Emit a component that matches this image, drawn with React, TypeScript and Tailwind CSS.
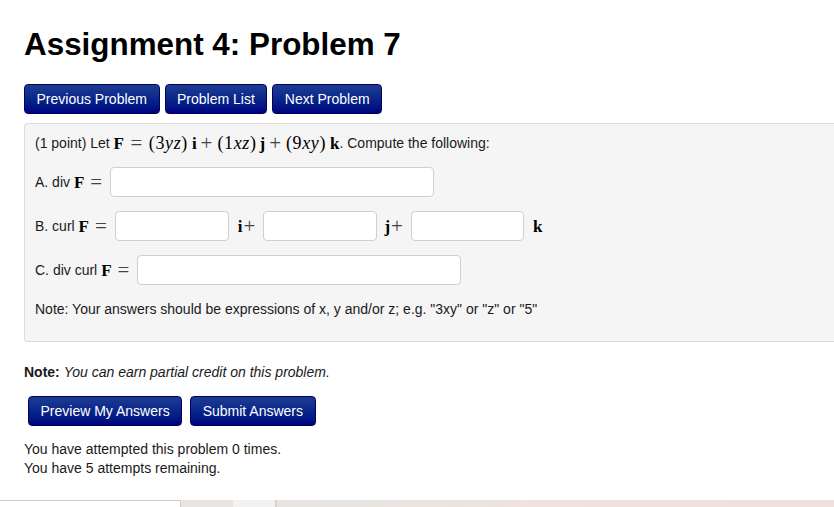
import type { ReactNode } from 'react';

const serif = "font-['Liberation_Serif','Times_New_Roman',serif]";

function Btn({ children }: { children: ReactNode }) {
    return (
        <button
            type="button"
            className="h-[30px] rounded-[4px] border border-[#00005e] bg-linear-to-b from-[#1f3c92] to-[#000080] px-[11.5px] text-[14px] leading-none text-white"
        >
            {children}
        </button>
    );
}

function Bold({ children }: { children: ReactNode }) {
    return <span className={`${serif} text-[17px] font-bold text-black`}>{children}</span>;
}

// = and + drawn larger and lighter, like the MathJax operators
function Op({ children, className = 'mx-[6.5px]' }: { children: ReactNode; className?: string }) {
    return <span className={`${serif} ${className} text-[21px] leading-none text-[#444]`}>{children}</span>;
}

function Paren({ n, v }: { n: string; v: string }) {
    return (
        <span className={`${serif} text-[18px] tracking-[0.6px] text-black`}>
            ({n}
            <i>{v}</i>)
        </span>
    );
}

function Field({ w }: { w: string }) {
    return <input type="text" className={`${w} h-[30px] rounded-[4px] border border-[#cfcfcf] bg-white`} />;
}

export default function App() {
    return (
        <div className="min-h-[507px] overflow-hidden bg-white font-['Liberation_Sans',Arial,sans-serif] text-[14px] text-[#1a1a1a]">
            <div className="pl-6 pt-[29px]">
                <h1 className="text-[31.4px] font-bold leading-none text-black">Assignment 4: Problem 7</h1>

                <div className="mt-[24px] flex gap-[5px]">
                    <Btn>Previous Problem</Btn>
                    <Btn>Problem List</Btn>
                    <Btn>Next Problem</Btn>
                </div>

                <div className="mt-[9px] flex flex-col gap-[14px] rounded-l-[4px] border border-r-0 border-[#dddddd] bg-[#f5f5f5] pb-[22px] pl-[10px] pt-[9px]">
                    <p className="flex h-[20px] items-center whitespace-pre">
                        <span>(1 point) Let </span>
                        <Bold>F</Bold>
                        <Op>=</Op>
                        <Paren n="3" v="yz" />
                        <span className="ml-[4px]"><Bold>i</Bold></span>
                        <Op className="ml-[4px] mr-[5px]">+</Op>
                        <Paren n="1" v="xz" />
                        <span className="ml-[3px]"><Bold>j</Bold></span>
                        <Op className="ml-[4px] mr-[5px]">+</Op>
                        <Paren n="9" v="xy" />
                        <span className="ml-[4px]"><Bold>k</Bold></span>
                        <span>. Compute the following:</span>
                    </p>

                    <div className="flex h-[30px] items-center whitespace-pre">
                        <span>A. div </span>
                        <Bold>F</Bold>
                        <Op className="ml-[6px] mr-[8px]">=</Op>
                        <Field w="w-[324px]" />
                    </div>

                    <div className="flex h-[30px] items-center whitespace-pre">
                        <span>B. curl </span>
                        <Bold>F</Bold>
                        <Op className="ml-[6px] mr-[8px]">=</Op>
                        <Field w="w-[114px]" />
                        <span className="ml-[9px] mr-[8px] flex items-center">
                            <Bold>i</Bold>
                            <Op className="ml-[1px]">+</Op>
                        </span>
                        <Field w="w-[114px]" />
                        <span className="ml-[7px] mr-[8px] flex items-center">
                            <Bold>j</Bold>
                            <Op className="ml-[1px]">+</Op>
                        </span>
                        <Field w="w-[113px]" />
                        <span className="ml-[9px]"><Bold>k</Bold></span>
                    </div>

                    <div className="flex h-[30px] items-center whitespace-pre">
                        <span>C. div curl </span>
                        <Bold>F</Bold>
                        <Op className="ml-[6px] mr-[8px]">=</Op>
                        <Field w="w-[324px]" />
                    </div>

                    <p className="h-[20px] leading-[20px]">
                        Note: Your answers should be expressions of x, y and/or z; e.g. "3xy" or "z" or "5"
                    </p>
                </div>

                <p className="mt-[21px] leading-[19px]">
                    <b>Note:</b> <i>You can earn partial credit on this problem.</i>
                </p>

                <div className="ml-[4px] mt-[14px] flex gap-[8px]">
                    <Btn>Preview My Answers</Btn>
                    <Btn>Submit Answers</Btn>
                </div>

                <div className="mt-[14px] leading-[19px]">
                    <p>You have attempted this problem 0 times.</p>
                    <p>You have 5 attempts remaining.</p>
                </div>
            </div>

            <div className="mt-[22px] flex h-[7px]">
                <div className="w-[181px] border-r border-t border-[#cccccc] bg-white" />
                <div className="w-[52px] bg-[#e9e5e2]" />
                <div className="w-[44px] border-r-2 border-[#d5d2cf] bg-[#f4f2f0]" />
                <div className="flex-1 bg-linear-to-r from-[#e8e5e1] via-[#efe3de] to-[#eee1dc]" />
            </div>
        </div>
    );
}
